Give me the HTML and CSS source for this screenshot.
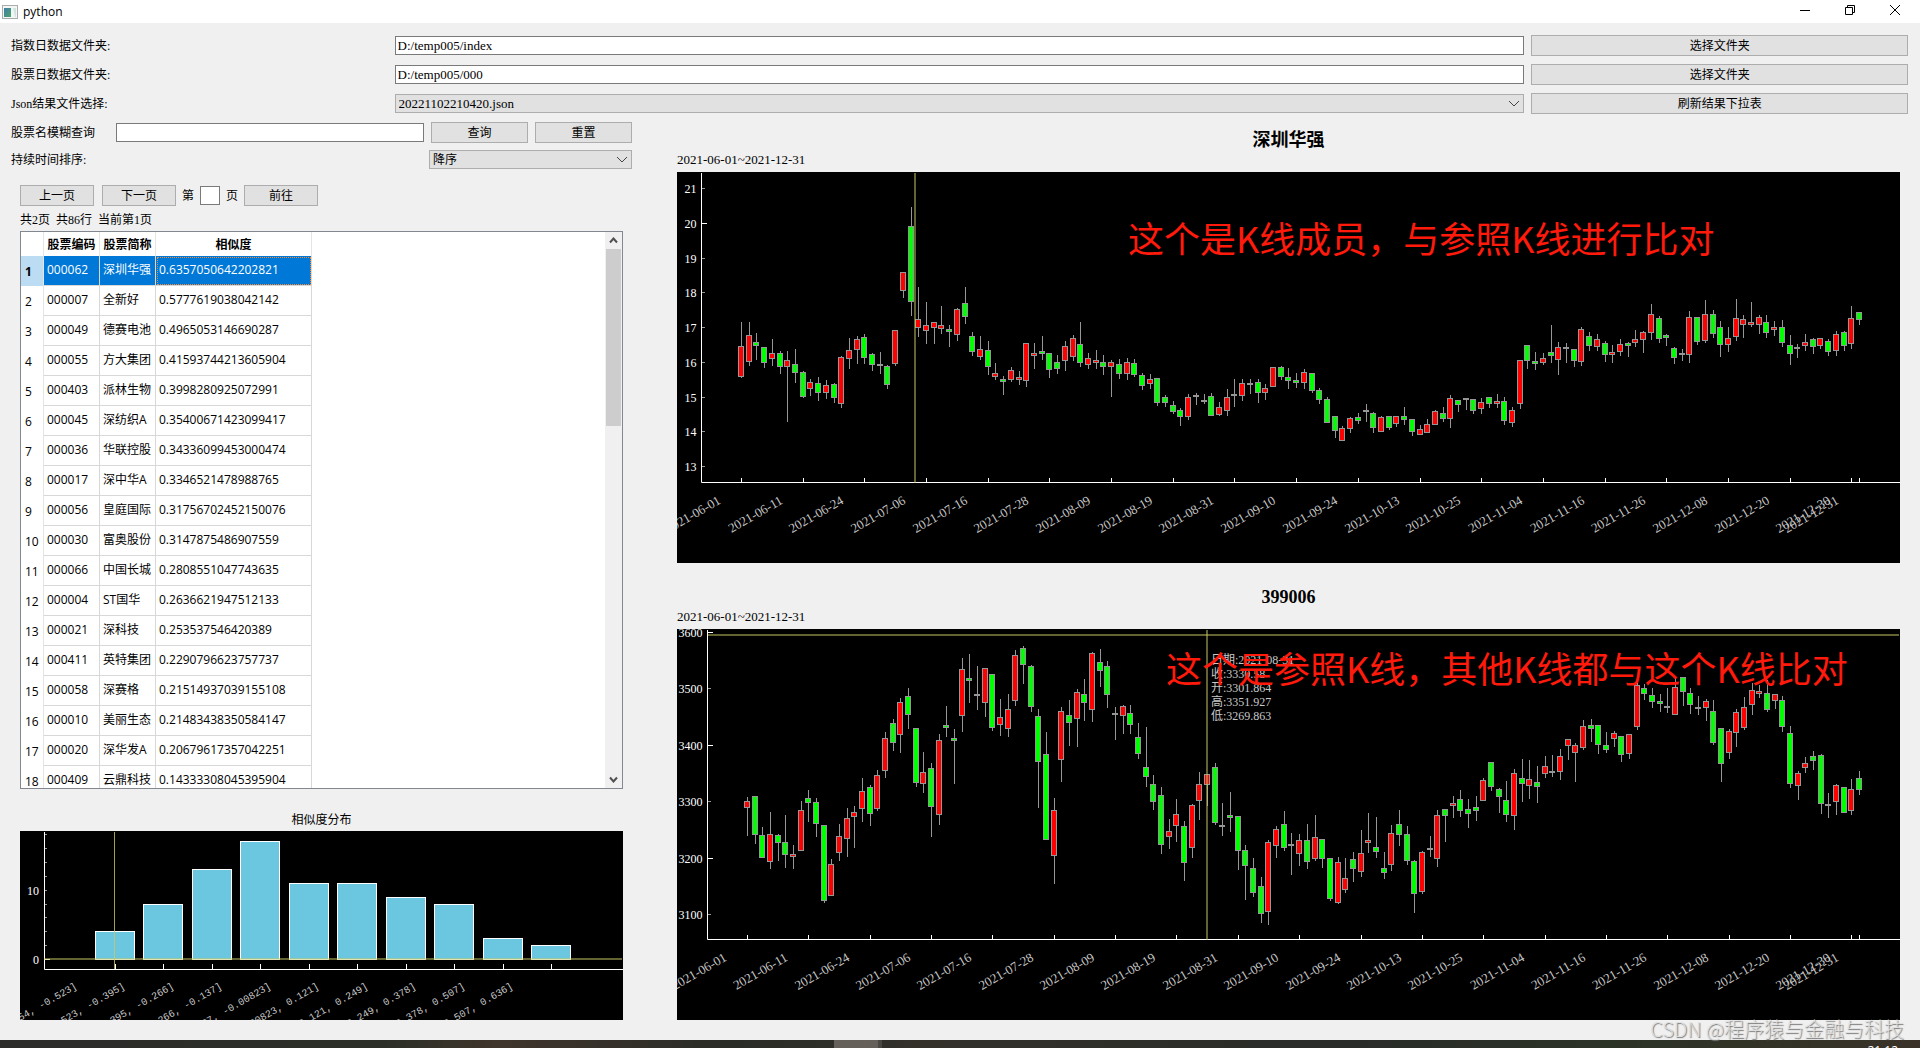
FILE: index.html
```html
<!DOCTYPE html>
<html lang="zh-CN">
<head>
  <meta charset="utf-8">
  <title>python</title>
  <link rel="stylesheet" href="styles.css">
</head>
<body>

<!-- Title bar -->
<header class="titlebar">
  <svg class="app-icon" width="16" height="14" viewBox="0 0 16 14">
    <defs>
      <linearGradient id="iconFill" x1="0" y1="0" x2="1" y2="1">
        <stop offset="0" stop-color="#3f7fa8"/>
        <stop offset="1" stop-color="#4fa36c"/>
      </linearGradient>
    </defs>
    <rect x="0.5" y="0.5" width="15" height="13" fill="#f4f6f6" stroke="#a9adad"/>
    <rect x="2" y="3" width="7" height="9" fill="url(#iconFill)"/>
    <path d="M11 3h3v9h-1z" fill="#cfe6e0"/>
  </svg>
  <h1>python</h1>
  <div class="window-buttons">
    <button aria-label="最小化"><svg width="12" height="12"><path d="M1 6.5h10"/></svg></button>
    <button aria-label="还原"><svg width="12" height="12"><path d="M1.5 3.5h7v7h-7zM3.500 3.500v-2h7v7h-2"/></svg></button>
    <button aria-label="关闭"><svg width="12" height="12"><path d="M1 1l10 10M11 1L1 11"/></svg></button>
  </div>
</header>

<!-- Data sources -->
<form class="sources">
  <label for="indexDir">指数日数据文件夹:</label>
  <input type="text" id="indexDir" value="D:/temp005/index">
  <button type="button">选择文件夹</button>

  <label for="stockDir">股票日数据文件夹:</label>
  <input type="text" id="stockDir" value="D:/temp005/000">
  <button type="button">选择文件夹</button>

  <label for="resultFile">Json结果文件选择:</label>
  <div class="select">
    <select id="resultFile"><option>20221102210420.json</option></select>
    <svg width="12" height="8"><path d="M1 1l5 5l5-5"/></svg>
  </div>
  <button type="button">刷新结果下拉表</button>
</form>

<main>
  <section class="left">
    <div class="search">
      <label for="stockName">股票名模糊查询</label>
      <input type="text" id="stockName">
      <button type="button">查询</button>
      <button type="button">重置</button>
    </div>
    <div class="sort">
      <label for="sortOrder">持续时间排序:</label>
      <div class="select">
        <select id="sortOrder"><option>降序</option><option>升序</option></select>
        <svg width="12" height="8"><path d="M1 1l5 5l5-5"/></svg>
      </div>
    </div>

    <div class="result">
      <div class="pager">
        <button type="button">上一页</button>
        <button type="button">下一页</button>
        <label for="pageNo">第</label>
        <input type="text" id="pageNo">
        <span>页</span>
        <button type="button">前往</button>
      </div>
      <p class="page-info"><span>共2页</span> <span>共86行</span> <span>当前第1页</span></p>

      <div class="table-box">
        <div class="table-view">
          <table id="stockTable">
            <thead>
              <tr><th></th><th>股票编码</th><th>股票简称</th><th>相似度</th></tr>
            </thead>
            <tbody></tbody>
          </table>
        </div>
        <div class="scrollbar">
          <svg width="9" height="7"><path d="M1 5.500l3.500-4l3.500 4"/></svg>
          <div class="thumb"></div>
          <svg class="down" width="9" height="7"><path d="M1 1.500l3.500 4l3.500-4"/></svg>
        </div>
      </div>

      <h3>相似度分布</h3>
      <svg class="chart" id="histogram" viewBox="0 0 603 189"></svg>
    </div>
  </section>

  <section class="right">
    <h2>深圳华强</h2>
    <p class="range">2021-06-01~2021-12-31</p>
    <svg class="chart" id="memberChart" viewBox="0 0 1223 391"></svg>

    <h2>399006</h2>
    <p class="range">2021-06-01~2021-12-31</p>
    <svg class="chart" id="baseChart" viewBox="0 0 1223 391"></svg>
  </section>
</main>

<footer class="taskbar">
  <div class="task"></div>
  <span class="clock">21:12</span>
</footer>
<div class="watermark">CSDN @程序猿与金融与科技</div>

<script src="charts.js"></script>
</body>
</html>
```

FILE: styles.css
```css
* { box-sizing: border-box; }
body {
  margin: 0; min-height: 100vh; background: #f0f0f0; color: #000;
  font-family: "Liberation Serif", "Noto Sans CJK SC", serif; font-size: 12px; line-height: 16px;
  display: flex; flex-direction: column; position: relative; overflow: hidden;
}
h1, h2, h3, p { margin: 0; }

/* title bar */
.titlebar {
  display: flex; align-items: center; height: 23px; padding-left: 2px; gap: 5px;
  background: #fff;
}
.titlebar h1 { flex: 1; font-family: "Open Sans", sans-serif; font-size: 12px; font-weight: normal; }
.window-buttons { display: flex; padding: 0 3px 4px 0; }
.window-buttons button {
  width: 45px; height: 18px; padding: 0; border: 0; background: none;
  display: flex; align-items: center; justify-content: center;
}
.window-buttons path { fill: none; stroke: #000; }

/* controls */
button, input, select { font: inherit; color: #000; border-radius: 0; margin: 0; min-width: 0; }
button { height: 21px; padding: 1px 0 0; background: #e1e1e1; border: 1px solid #adadad; line-height: 18px; }
label, .pager span { padding-top: 1px; }
input { height: 19px; padding: 0 2px; background: #fff; border: 1px solid #7a7a7a; font-size: 13px; }
.select { position: relative; display: flex; }
.select select {
  appearance: none; width: 100%; height: 19px; padding: 0 3px;
  background: #e1e1e1; border: 1px solid #adadad;
}
.select svg { position: absolute; right: 4px; top: 6px; }
.select path { fill: none; stroke: #444; }

.sources {
  display: grid; grid-template-columns: 1fr 3fr 1fr; gap: 8px 7px; align-items: center;
  padding: 12px 12px 8px 11px;
}
.sources select { font-size: 13px; }

main {
  display: grid; grid-template-columns: 621fr 1223fr; gap: 45px;
  padding: 0 20px 20px 11px;
}

/* left side */
.search { display: flex; align-items: center; gap: 7px; }
.search label { width: 98px; }
.search input { flex: 1; }
.search button { width: 97px; }
.sort { display: flex; align-items: center; justify-content: space-between; margin-top: 7px; }
.sort .select { width: 203px; }
.result { padding: 16px 9px 0; }
.pager { display: flex; align-items: center; gap: 6px; }
.pager button { width: 74px; }
.pager button + button { margin-left: 2px; }
.pager input { width: 20px; }
.page-info { display: flex; gap: 6px; margin: 6px 0 3px; }

.table-box {
  display: flex; height: 558px; background: #fff; border: 1px solid #828790;
  font-family: "Open Sans", "Noto Sans CJK SC", sans-serif;
}
.table-view { flex: 1; overflow: hidden; }
table { border-collapse: separate; border-spacing: 0; table-layout: fixed; width: 291px; }
th, td { padding: 0 3px; text-align: left; white-space: nowrap; border-right: 1px solid #d8d8d8; }
thead th { height: 24px; padding: 2px 0 0; text-align: center; border-right-color: #e5e5e5; }
thead th:nth-child(1) { width: 23px; }
thead th:nth-child(2), thead th:nth-child(3) { width: 56px; }
tbody th { height: 30px; padding: 2px 0 0 4px; font-weight: normal; border-right-color: #e5e5e5; }
tbody td { padding-bottom: 2px; border-bottom: 1px solid #d8d8d8; }
tbody .selected th { background: #bcdcf4; font-weight: bold; }
tbody .selected td { background: #0078d7; color: #fff; }
tbody .selected td:last-child { outline: 1px dotted #ff8728; outline-offset: -2px; }

.scrollbar {
  width: 17px; padding: 5px 0; background: #f0f0f0;
  display: flex; flex-direction: column; align-items: center;
}
.scrollbar path { fill: none; stroke: #505050; stroke-width: 2; }
.scrollbar .thumb { width: 15px; height: 177px; margin-top: 5px; background: #cdcdcd; }
.scrollbar .down { margin-top: auto; }

h3 { margin: 21px 0 1px; font-size: 12px; line-height: 20px; font-weight: normal; text-align: center; }

/* right side */
.right h2 { margin-top: 20px; padding-top: 2px; font-size: 18px; line-height: 24px; text-align: center; }
.right h2:first-child { margin-top: 4px; }
.right .range { margin-bottom: 4px; font-size: 13px; }

/* charts */
.chart { display: block; width: 100%; height: auto; background: #000; }
.axis { stroke: #fff; fill: none; }
.minor { stroke: #969696; }
.label { fill: #c8c8c8; font-size: 13px; }
#histogram .label { font-family: "Liberation Mono", monospace; font-size: 10px; }
.scale { fill: #fff; font-size: 12px; text-anchor: end; }
.tip { fill: #c8c8c8; font-size: 12px; }
.cross { stroke: #c8c864; stroke-opacity: 0.5; stroke-width: 2; }
.cross-thin { stroke: #c8c864; stroke-opacity: 0.8; }
.bar { fill: #6bc6e0; stroke: #fff; }
.candle { stroke: #969696; fill: none; }
.up { fill: #f00; }
.down-day { fill: #0f0; }
.note { fill: #ff1a0c; font-size: 36px; font-family: "Noto Sans CJK SC", sans-serif; }

.taskbar { position: relative; height: 8px; overflow: hidden; background: linear-gradient(90deg, #2b2b29, #2b2e27 20%, #3f352c 26%, #292b26 38%, #33302a 48%, #282b28 70%, #2c3326 85%, #3a3229); }
.taskbar .task { width: 48px; height: 8px; margin-left: 834px; background: #65615a; border-right: 4px solid #4a4742; }
.clock { position: absolute; right: 22px; top: 3px; color: #fff; font-family: "Open Sans", sans-serif; }
.watermark {
  position: absolute; right: 16px; bottom: 5px; font-size: 20px; line-height: 28px;
  font-family: "Noto Sans CJK SC", sans-serif; font-weight: 300;
  color: rgba(225, 225, 225, 0.9); text-shadow: 1px 1px 1px #777;
}
```

FILE: charts.js
```js
const stocks = [
  ["000062", "深圳华强", "0.6357050642202821"],
  ["000007", "全新好", "0.5777619038042142"],
  ["000049", "德赛电池", "0.4965053146690287"],
  ["000055", "方大集团", "0.41593744213605904"],
  ["000403", "派林生物", "0.3998280925072991"],
  ["000045", "深纺织A", "0.35400671423099417"],
  ["000036", "华联控股", "0.34336099453000474"],
  ["000017", "深中华A", "0.3346521478988765"],
  ["000056", "皇庭国际", "0.31756702452150076"],
  ["000030", "富奥股份", "0.3147875486907559"],
  ["000066", "中国长城", "0.2808551047743635"],
  ["000004", "ST国华", "0.2636621947512133"],
  ["000021", "深科技", "0.253537546420389"],
  ["000411", "英特集团", "0.2290796623757737"],
  ["000058", "深赛格", "0.21514937039155108"],
  ["000010", "美丽生态", "0.21483438350584147"],
  ["000020", "深华发A", "0.20679617357042251"],
  ["000409", "云鼎科技", "0.14333308045395904"]
];

const dates = ["2021-06-01", "2021-06-11", "2021-06-24", "2021-07-06", "2021-07-16",
  "2021-07-28", "2021-08-09", "2021-08-19", "2021-08-31", "2021-09-10", "2021-09-24",
  "2021-10-13", "2021-10-25", "2021-11-04", "2021-11-16", "2021-11-26", "2021-12-08",
  "2021-12-20", "2021-12-30", "2021-12-31"];

// one day each: high, body top, body bottom, low (3 steps per px), r = up, g = down, d = flat
const memberDays = `486 559 650 653 r,486 526 605 615 r,519 547 557 597 g,562 562 608 621 g,537 580 596 615 r,
573 580 618 639 g,573 601 618 783 r,567 613 638 666 g,633 637 710 713 g,657 667 686 705 r,
651 669 698 720 g,660 676 698 714 r,669 673 713 726 g,588 592 731 741 r,534 571 596 624 r,
528 538 569 609 r,522 532 593 609 g,579 583 614 630 g,576 613 614 639 d,615 619 674 684 g,
511 511 611 615 r,337 337 392 411 r,141 199 425 465 g,381 478 503 528 r,426 496 512 549 r,
487 487 503 549 r,438 496 506 519 r,495 508 515 558 g,444 448 524 540 r,381 430 470 489 g,
516 529 575 585 g,528 568 590 597 r,543 571 618 642 g,609 640 650 657 r,648 658 665 702 g,
621 631 659 663 r,633 652 659 672 r,550 550 662 678 r,549 580 587 624 r,528 574 581 597 g,
579 580 629 651 g,585 607 626 639 g,543 559 602 630 r,525 535 590 600 r,486 553 608 618 g,
579 595 612 624 r,570 601 608 624 r,585 607 618 642 g,600 607 618 708 r,597 613 639 654 g,
594 607 639 657 r,597 610 642 648 g,639 646 675 687 g,642 658 669 684 r,655 655 726 735 g,
705 712 726 738 g,723 736 753 759 g,744 751 768 795 g,702 712 768 777 r,699 707 710 732 d,
702 721 725 729 d,699 709 765 765 g,726 742 762 765 r,687 712 750 765 r,657 704 707 738 d,
657 670 705 720 r,657 670 673 699 d,657 667 698 726 g,672 685 698 717 r,622 622 678 678 r,
618 622 648 657 g,624 652 662 684 g,639 661 668 681 g,627 637 668 684 r,640 640 692 696 g,
684 691 719 729 g,711 718 786 786 g,769 769 812 831 g,798 805 842 842 r,771 775 806 816 r,
759 772 780 789 g,732 751 754 783 d,756 760 801 816 g,768 772 815 815 r,769 769 803 807 g,
769 769 791 798 r,741 769 779 792 g,778 778 815 825 g,795 808 822 822 r,777 793 818 818 r,
750 754 794 794 r,741 760 776 783 g,705 715 776 801 r,721 721 734 753 g,715 715 717 747 d,
718 718 752 759 g,714 727 746 759 r,712 712 731 741 g,702 724 731 741 r,711 724 782 792 g,
741 751 786 798 r,601 601 731 744 r,556 556 602 624 g,576 604 611 627 g,579 595 608 612 r,
495 577 587 606 g,546 562 599 642 r,549 562 565 606 d,568 568 602 618 g,501 508 605 615 r,
516 529 557 570 g,522 538 560 570 r,543 550 584 603 g,555 577 584 606 r,537 553 575 585 r,
546 550 557 588 g,510 538 548 558 r,513 517 539 576 r,432 463 518 537 r,468 475 536 546 g,
522 526 533 555 g,561 565 593 609 g,567 580 583 600 d,453 472 584 606 r,472 472 545 552 g,
420 463 542 546 r,450 463 521 531 g,483 502 554 588 g,501 535 554 573 r,417 475 530 540 r,
465 478 494 531 r,426 487 494 498 r,465 472 494 519 r,465 487 518 531 g,483 502 509 525 r,
480 502 548 558 g,525 556 581 612 g,552 562 566 591 d,522 547 557 570 r,534 538 560 579 g,
535 535 557 564 r,537 544 575 585 g,513 523 572 585 r,513 517 557 570 g,438 475 551 564 r,
457 457 479 492 g`;

const baseDays = `591 604 623 705 r,589 589 704 729 g,681 706 773 773 g,636 703 785 804 r,702 706 728 780 g,
645 727 762 801 g,735 763 770 804 r,603 631 752 752 r,570 595 608 663 g,594 607 671 708 g,
676 676 902 906 g,777 793 887 887 r,672 709 758 780 r,624 655 716 768 r,618 637 650 741 r,
534 574 626 663 r,555 562 641 675 g,510 526 626 630 r,396 415 512 531 r,357 370 428 450 g,
294 307 404 456 r,264 289 344 384 g,385 385 548 558 g,456 517 551 576 r,489 505 620 708 g,
402 421 644 672 r,318 376 383 408 g,387 415 422 549 g,174 208 347 393 r,162 235 242 306 g,
198 283 287 327 d,205 205 308 348 r,223 223 383 390 g,297 352 374 405 r,282 328 386 408 r,
150 166 302 315 r,138 145 194 249 g,195 199 320 333 g,327 349 485 621 g,396 463 719 719 g,
594 631 767 849 r,321 334 479 543 r,300 346 368 435 g,267 277 356 438 r,237 283 308 360 g,
156 160 329 363 r,147 187 212 258 g,183 199 284 321 g,321 340 344 417 d,315 319 347 399 r,
315 340 374 399 g,369 412 461 474 g,381 502 530 558 g,525 553 605 627 g,561 586 734 759 g,
657 694 710 744 r,597 643 677 723 r,663 679 788 840 g,612 616 743 771 r,516 553 602 657 r,
523 523 554 615 r,489 502 668 672 g,609 676 680 705 d,576 646 653 693 g,649 649 752 807 g,
735 751 797 897 g,774 805 878 888 g,831 859 941 966 g,720 727 935 972 r,678 688 737 771 r,
633 673 743 750 g,699 733 737 822 d,702 721 761 795 r,672 721 785 804 g,645 712 776 780 r,
718 718 776 801 g,775 775 896 900 g,771 787 906 909 r,774 835 869 876 r,756 778 806 843 g,
690 760 815 828 r,639 721 728 756 r,651 742 755 771 g,756 805 818 834 g,675 700 794 810 r,
630 673 704 735 g,678 703 782 792 g,780 784 881 936 g,753 757 875 879 r,708 745 748 768 d,
630 646 776 798 r,628 628 647 723 g,588 610 617 651 r,570 598 632 648 g,597 628 641 681 g,
588 622 632 660 g,534 541 602 602 r,487 487 560 570 g,564 568 590 636 g,543 601 644 663 g,
507 520 647 687 r,477 535 551 603 g,480 538 557 594 r,498 547 560 606 g,468 499 521 531 r,
465 514 518 528 d,447 469 515 537 r,418 418 437 477 r,429 436 458 543 r,360 379 443 447 r,
357 376 386 423 g,376 376 434 459 g,396 436 449 456 g,393 400 416 438 r,409 409 464 483 g,
403 403 461 474 r,250 255 380 387 r,252 265 281 297 g,264 286 305 321 g,282 304 311 333 g,
264 319 321 336 d,235 262 344 344 r,232 232 275 315 g,264 280 314 339 g,288 322 325 342 d,
297 304 323 360 r,300 334 428 432 g,385 385 491 543 g,387 394 458 474 r,327 337 398 438 r,
291 322 383 387 r,250 271 314 342 r,255 274 281 291 r,240 280 329 333 g,283 283 302 324 r,
288 301 380 393 g,378 400 551 561 g,513 520 557 597 r,471 490 503 516 r,453 469 482 507 g,
462 466 611 639 g,579 613 617 651 d,552 556 605 642 r,562 562 638 638 g,537 568 632 642 r,
513 535 569 582 g`;

const half = n => Math.floor(n) + 0.5;

function line(cls, x1, y1, x2, y2) {
  return `<line class="${cls}" x1="${x1}" y1="${y1}" x2="${x2}" y2="${y2}" shape-rendering="crispEdges"/>`;
}

function slanted(text, x, y) {
  return `<text class="label" text-anchor="end" transform="translate(${x} ${y}) rotate(-30)">${text}</text>`;
}

function drawCandles(id, opt) {
  let out = "";
  const right = 1182.5, bottom = 310.5;
  const step = (right - opt.first) / 145;

  out += `<path class="axis" d="M${opt.axis} 1V${bottom}H1223"/>`;
  opt.scale.forEach((value, i) => {
    const y = half(opt.scaleTop + i * opt.scaleStep);
    const major = opt.major.includes(value);
    out += line(major ? "axis" : "minor", opt.axis, y, opt.axis + (major ? 5 : 3), y);
    out += `<text class="scale" x="${opt.axis - 5}" y="${y + 4}">${value}</text>`;
  });
  dates.forEach((date, i) => {
    const x = half(opt.first + Math.min(i * 8, 145) * step);
    out += line("axis", x, bottom - 5, x, bottom);
    out += slanted(date, x - 20, 331);
  });

  opt.days.split(",").forEach((day, i) => {
    const parts = day.trim().split(" ");
    const [high, top, base, low] = parts.slice(0, 4).map(v => half((v - opt.top) / 3));
    const x = half(opt.first + i * step);
    out += line("candle", x, high - 0.5, x, low + 0.5);
    const fill = { r: "up", g: "down-day", d: "" }[parts[4]];
    out += `<rect class="candle ${fill}" x="${x - 3}" y="${top}" width="5" height="${Math.max(base - top, 1)}" shape-rendering="crispEdges"/>`;
  });

  out += line("cross", opt.crossX, 1, opt.crossX, bottom);
  if (opt.crossY) out += line("cross", opt.axis, opt.crossY, 1222, opt.crossY);
  (opt.tip || []).forEach((text, i) => {
    out += `<text class="tip" x="534" y="${35 + i * 14}">${text}</text>`;
  });
  out += `<text class="note" x="${opt.noteX}" y="${opt.noteY}">${opt.note}</text>`;
  document.getElementById(id).innerHTML = out;
}

function drawHistogram() {
  const counts = [4, 8, 13, 17, 11, 11, 9, 8, 3, 2];
  const bins = ["(-0.654, -0.523]", "(-0.523, -0.395]", "(-0.395, -0.266]", "(-0.266, -0.137]",
    "(-0.137, -0.00823]", "(-0.00823, 0.121]", "(0.121, 0.249]", "(0.249, 0.378]",
    "(0.378, 0.507]", "(0.507, 0.636]"];
  const zero = 128.5, unit = 6.92;
  let out = `<path class="axis" d="M24.5 1V138.5H603"/>`;
  for (let n = 0; n <= 18; n += 2) {
    const y = half(zero - n * unit);
    out += line(n ? "minor" : "axis", 24.5, y, n ? 27 : 30, y);
    if (n % 10 === 0) out += `<text class="scale" x="19" y="${y + 4}">${n}</text>`;
  }
  counts.forEach((count, i) => {
    const x = half(75 + i * 48.5);
    const y = half(zero - count * unit);
    out += `<rect class="bar" x="${x}" y="${y}" width="39" height="${zero - y}" shape-rendering="crispEdges"/>`;
    out += line("axis", x + 20, 133, x + 20, 138.5);
    out += slanted(bins[i], x - 18, 157);
  });
  out += line("cross-thin", 94.5, 1, 94.5, 138);
  out += line("cross", 24, 128, 602, 128);
  document.getElementById("histogram").innerHTML = out;
}

document.querySelector("#stockTable tbody").innerHTML = stocks.map((s, i) =>
  `<tr${i === 0 ? ' class="selected"' : ""}><th>${i + 1}</th><td>${s[0]}</td><td>${s[1]}</td><td>${s[2]}</td></tr>`
).join("");

drawCandles("memberChart", {
  days: memberDays, top: 36, axis: 24.5, first: 64.5,
  scale: [21, 20, 19, 18, 17, 16, 15, 14, 13], scaleTop: 16.5, scaleStep: 34.75, major: [20],
  crossX: 238, note: "这个是K线成员，与参照K线进行比对", noteX: 451, noteY: 81
});
drawCandles("baseChart", {
  days: baseDays, top: 87, axis: 30.5, first: 70.5,
  scale: [3600, 3500, 3400, 3300, 3200, 3100], scaleTop: 3.5, scaleStep: 56.4, major: [3600, 3400, 3200],
  crossX: 530, crossY: 6,
  tip: ["日期:2021-08-31", "收:3330.58", "开:3301.864", "高:3351.927", "低:3269.863"],
  note: "这个是参照K线，其他K线都与这个K线比对", noteX: 489, noteY: 54
});
drawHistogram();
```
